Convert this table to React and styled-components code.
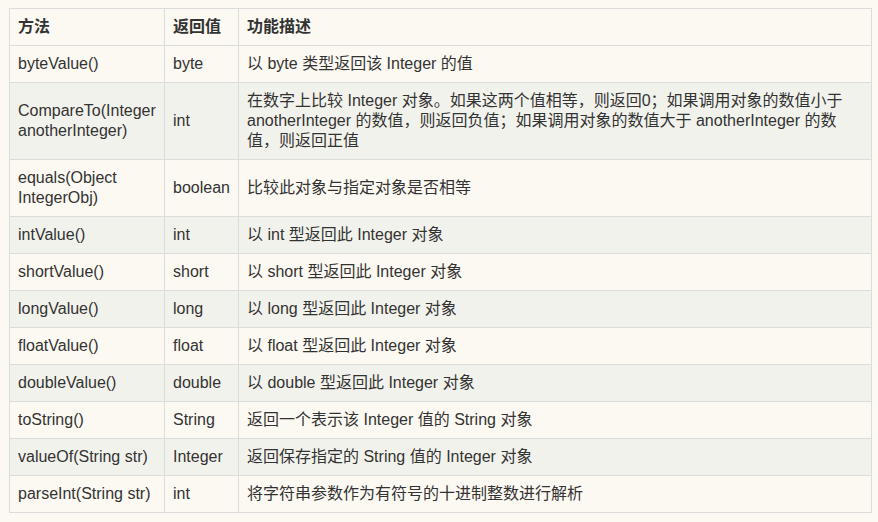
import React from "react";
import styled, { createGlobalStyle } from "styled-components";

const Global = createGlobalStyle`
  html, body {
    margin: 0;
    padding: 0;
    background: #fcf9f2;
  }
  body {
    font-family: "Liberation Sans", Arial, "Noto Sans CJK SC", sans-serif;
    color: #333;
  }
`;

const Page = styled.div`
  padding: 8px 6px 9px 9px;
`;

const Table = styled.table`
  width: 863px;
  border-collapse: collapse;
  table-layout: fixed;
  font-size: 16px;
  line-height: 20px;
  color: #333;
  border: 1px solid #dcdcdc;
`;

const Row = styled.tr`
  background: ${(p) => (p.$alt ? "#f2f2ec" : "#fcf9f2")};
`;

const Head = styled.th`
  text-align: left;
  font-weight: bold;
  padding: 8px;
  border: 1px solid #dcdcdc;
  vertical-align: middle;
`;

const Cell = styled.td`
  padding: 8px;
  border: 1px solid #dcdcdc;
  vertical-align: middle;
  word-wrap: break-word;
`;

const rows = [
  ["byteValue()", "byte", "以 byte 类型返回该 Integer 的值"],
  [
    "CompareTo(Integer anotherInteger)",
    "int",
    "在数字上比较 Integer 对象。如果这两个值相等，则返回0；如果调用对象的数值小于 anotherInteger 的数值，则返回负值；如果调用对象的数值大于 anotherInteger 的数值，则返回正值",
  ],
  ["equals(Object IntegerObj)", "boolean", "比较此对象与指定对象是否相等"],
  ["intValue()", "int", "以 int 型返回此 Integer 对象"],
  ["shortValue()", "short", "以 short 型返回此 Integer 对象"],
  ["longValue()", "long", "以 long 型返回此 Integer 对象"],
  ["floatValue()", "float", "以 float 型返回此 Integer 对象"],
  ["doubleValue()", "double", "以 double 型返回此 Integer 对象"],
  ["toString()", "String", "返回一个表示该 Integer 值的 String 对象"],
  ["valueOf(String str)", "Integer", "返回保存指定的 String 值的 Integer 对象"],
  ["parseInt(String str)", "int", "将字符串参数作为有符号的十进制整数进行解析"],
];

export default function App() {
  return (
    <Page>
      <Global />
      <Table>
        <colgroup>
          <col style={{ width: "155px" }} />
          <col style={{ width: "74px" }} />
          <col />
        </colgroup>
        <thead>
          <Row>
            <Head>方法</Head>
            <Head>返回值</Head>
            <Head>功能描述</Head>
          </Row>
        </thead>
        <tbody>
          {rows.map((r, i) => (
            <Row key={i} $alt={i % 2 === 1}>
              <Cell>{r[0]}</Cell>
              <Cell>{r[1]}</Cell>
              <Cell>{r[2]}</Cell>
            </Row>
          ))}
        </tbody>
      </Table>
    </Page>
  );
}
